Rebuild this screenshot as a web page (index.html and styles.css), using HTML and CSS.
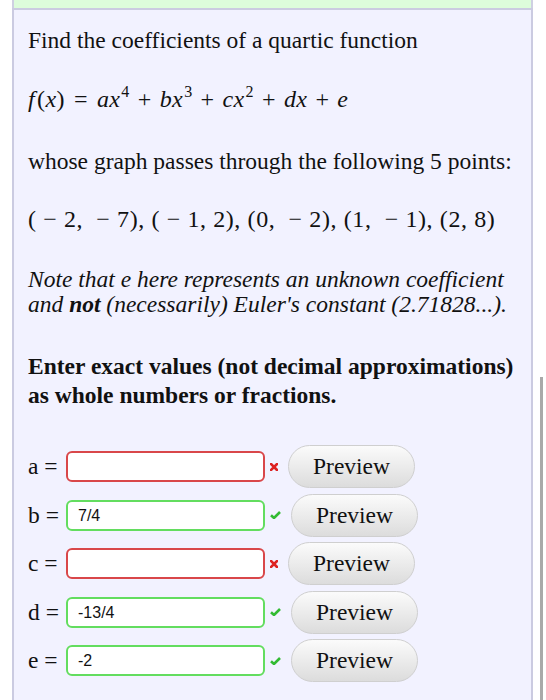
FILE: index.html
```
<!DOCTYPE html>
<html>
<head>
<meta charset="utf-8">
<link rel="stylesheet" href="styles.css">
</head>
<body>
<div class="prev"></div>
<div class="box">
  <p class="p1">Find the coefficients of a quartic function</p>
  <p class="math"><i class="fn">f</i>(<i>x</i>)<span class="rel">=</span><i>ax</i><sup>4</sup><span class="op">+</span><i>bx</i><sup>3</sup><span class="op">+</span><i>cx</i><sup>2</sup><span class="op">+</span><i>dx</i><span class="op">+</span><i>e</i></p>
  <p class="p3">whose graph passes through the following 5 points:</p>
  <p class="pts">( − 2,  − 7), ( − 1, 2), (0,  − 2), (1,  − 1), (2, 8)</p>
  <p class="note"><i>Note that e here represents an unknown coefficient<br>and <b>not</b> (necessarily) Euler's constant (2.71828...).</i></p>
  <p class="enter"><b>Enter exact values (not decimal approximations)<br>as whole numbers or fractions.</b></p>
  <div class="rows">
    <div class="row">
      <span class="lbl">a =</span>
      <span class="inp bad"></span>
      <svg class="ico" width="8" height="8" viewBox="0 0 8 8"><path d="M1 1L7 7M7 1L1 7" stroke="#d22" stroke-width="2.6" stroke-linecap="square"/></svg>
      <span class="btn">Preview</span>
    </div>
    <div class="row">
      <span class="lbl">b =</span>
      <span class="inp good">7/4</span>
      <svg class="ico" width="11" height="8" viewBox="0 0 11 8"><path d="M1 4.2L4 7L10 1" stroke="#3b3" stroke-width="2.6" fill="none"/></svg>
      <span class="btn">Preview</span>
    </div>
    <div class="row">
      <span class="lbl">c =</span>
      <span class="inp bad"></span>
      <svg class="ico" width="8" height="8" viewBox="0 0 8 8"><path d="M1 1L7 7M7 1L1 7" stroke="#d22" stroke-width="2.6" stroke-linecap="square"/></svg>
      <span class="btn">Preview</span>
    </div>
    <div class="row">
      <span class="lbl">d =</span>
      <span class="inp good">-13/4</span>
      <svg class="ico" width="11" height="8" viewBox="0 0 11 8"><path d="M1 4.2L4 7L10 1" stroke="#3b3" stroke-width="2.6" fill="none"/></svg>
      <span class="btn">Preview</span>
    </div>
    <div class="row">
      <span class="lbl">e =</span>
      <span class="inp good">-2</span>
      <svg class="ico" width="11" height="8" viewBox="0 0 11 8"><path d="M1 4.2L4 7L10 1" stroke="#3b3" stroke-width="2.6" fill="none"/></svg>
      <span class="btn">Preview</span>
    </div>
  </div>
</div>
<div class="scroll"></div>
</body>
</html>
```
FILE: styles.css
```
html, body {
  margin: 0;
  padding: 0;
  background: #ffffff;
}
body {
  font-family: "Liberation Serif", "Times New Roman", serif;
  font-size: 23.5px;
  color: #111;
  width: 546px;
  height: 700px;
  overflow: hidden;
  position: relative;
}
.prev {
  margin-left: 12px;
  width: 517px;
  height: 8px;
  background: #ddfcdb;
  border-left: 2px solid #cfd0e2;
  border-right: 2px solid #cfd0e2;
}
.box {
  margin-left: 12px;
  width: 489px;
  height: 700px;
  background: #f2f2ff;
  border: 2px solid #cbcbe1;
  padding: 18px 14px 0 14px;
}
p {
  margin: 0;
  line-height: 25px;
}
.math {
  margin-top: 34px;
  font-size: 24px;
  letter-spacing: 0.4px;
}
.fn {
  margin-right: 2px;
}
.rel {
  padding: 0 9px;
}
.op {
  padding: 0 8px;
}
sup {
  font-size: 16px;
  line-height: 0;
  vertical-align: 10px;
  margin-left: 1px;
}
.p3 { margin-top: 37px; }
.pts {
  margin-top: 33px;
  white-space: pre;
  font-size: 24px;
  letter-spacing: 0.6px;
}
.note { margin-top: 35px; }
.enter { margin-top: 35px; line-height: 29px; }
.rows {
  margin-top: 35px;
  display: flex;
  flex-direction: column;
  gap: 5.5px;
}
.row {
  display: flex;
  align-items: center;
  height: 43px;
}
.lbl {
  width: 38px;
  white-space: nowrap;
}
.inp {
  box-sizing: border-box;
  width: 199px;
  height: 31px;
  border-radius: 6px;
  background: #fff;
  font-family: "Liberation Sans", Arial, sans-serif;
  font-size: 16px;
  line-height: 27px;
  padding-left: 10px;
  color: #111;
}
.bad { border: 2px solid #d9474a; }
.good { border: 2px solid #63dd5f; }
.ico {
  margin-left: 5px;
}
.btn {
  box-sizing: border-box;
  margin-left: 10px;
  width: 127px;
  height: 43px;
  border-radius: 22px;
  border: 1px solid #cfcfcf;
  background: linear-gradient(#fbfbfb, #dcdcdc);
  display: flex;
  align-items: center;
  justify-content: center;
  font-size: 23.5px;
  color: #111;
}
.scroll {
  position: absolute;
  left: 540px;
  top: 377px;
  width: 3px;
  height: 323px;
  background: #a9a9a9;
}
```
